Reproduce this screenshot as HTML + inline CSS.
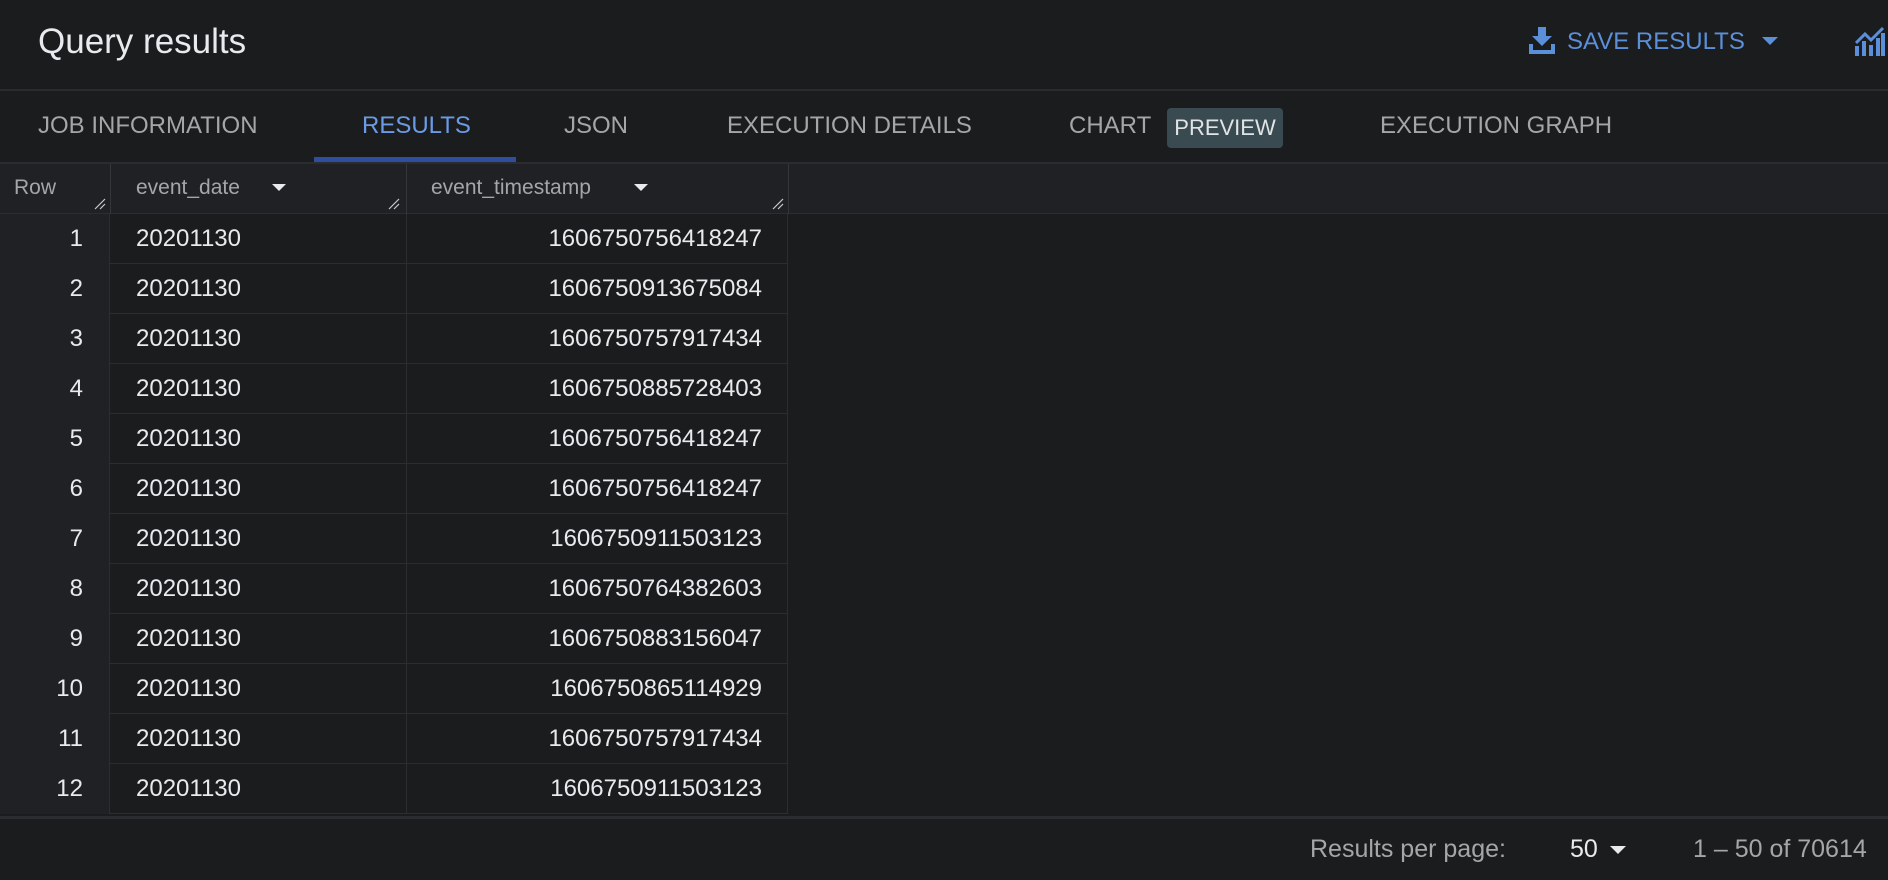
<!DOCTYPE html>
<html><head><meta charset="utf-8"><style>
*{margin:0;padding:0;box-sizing:border-box}
body{width:1888px;height:880px;background:#1b1c1e;font-family:"Liberation Sans",sans-serif;position:relative;overflow:hidden;color:#e8eaed}
.a{position:absolute;white-space:nowrap}
.tab{position:absolute;top:112px;font-size:24px;color:#a4a6a8}
.row{position:absolute;left:0;width:788px;height:50px;border-bottom:1px solid #2c2d30}
.row .n{position:absolute;left:0;width:110px;height:50px;background:#202124;border-right:1px solid #2c2d30;text-align:right;padding-right:26px;line-height:50px;font-size:24px}
.row .d{position:absolute;left:136px;line-height:50px;font-size:24px}
.row .t{position:absolute;left:406px;width:382px;height:50px;border-left:1px solid #2c2d30;border-right:1px solid #2c2d30;text-align:right;padding-right:25px;line-height:50px;font-size:24px}
.rs{position:absolute;bottom:4px;width:12px;height:12px}
</style></head><body>
<div class="a" style="left:38px;top:22px;font-size:35px;color:#e8eaed">Query results</div>
<svg class="a" style="left:1529px;top:27px" width="26" height="28" viewBox="0 0 26 28"><path d="M9 0h8v9h6L13 19 3 9h6z" fill="#5b8fd9"/><path d="M0 17h4v6h18v-6h4v10H0z" fill="#5b8fd9"/></svg>
<div class="a" style="left:1567px;top:28px;font-size:24px;color:#5b8fd9;font-weight:500">SAVE RESULTS</div>
<svg class="a" style="left:1762px;top:37px" width="16" height="9"><path d="M0 0h16L8 8z" fill="#5b8fd9"/></svg>
<svg class="a" style="left:1855px;top:26px" width="30" height="30" viewBox="0 0 30 30"><path d="M1 17l9-9 6 6L28 2" stroke="#5b8fd9" stroke-width="3" fill="none"/><rect x="0" y="20" width="4" height="10" fill="#5b8fd9"/><rect x="7" y="15" width="4" height="15" fill="#5b8fd9"/><rect x="14" y="19" width="4" height="11" fill="#5b8fd9"/><rect x="21" y="12" width="4" height="18" fill="#5b8fd9"/><rect x="26" y="7" width="4" height="23" fill="#5b8fd9"/></svg>
<div class="a" style="left:0;top:89px;width:1888px;height:2px;background:#2b2c2f"></div>
<div class="tab" style="left:38px">JOB INFORMATION</div>
<div class="tab" style="left:362px;color:#6b9be6">RESULTS</div>
<div class="tab" style="left:564px">JSON</div>
<div class="tab" style="left:727px">EXECUTION DETAILS</div>
<div class="tab" style="left:1069px">CHART</div>
<div class="a" style="left:1167px;top:108px;width:116px;height:40px;background:#3a4a51;border-radius:4px;color:#e0e4e6;font-size:22px;line-height:40px;text-align:center">PREVIEW</div>
<div class="tab" style="left:1380px">EXECUTION GRAPH</div>
<div class="a" style="left:314px;top:157px;width:202px;height:5px;background:#2f4f9e"></div>
<div class="a" style="left:0;top:162px;width:1888px;height:2px;background:#2b2c2f"></div>
<div class="a" style="left:0;top:164px;width:1888px;height:50px;background:#202124;border-bottom:1px solid #2c2d30"></div>
<div class="a" style="left:110px;top:164px;width:1px;height:50px;background:#35363a"></div>
<div class="a" style="left:406px;top:164px;width:1px;height:50px;background:#35363a"></div>
<div class="a" style="left:788px;top:164px;width:1px;height:50px;background:#35363a"></div>
<div class="a" style="left:14px;top:176px;font-size:21px;color:#a4a6a8">Row</div>
<div class="a" style="left:136px;top:176px;font-size:21px;color:#a4a6a8">event_date</div>
<svg class="a" style="left:272px;top:184px" width="14" height="8"><path d="M0 0h14L7 7z" fill="#e8eaed"/></svg>
<div class="a" style="left:431px;top:176px;font-size:21px;color:#a4a6a8">event_timestamp</div>
<svg class="a" style="left:634px;top:184px" width="14" height="8"><path d="M0 0h14L7 7z" fill="#e8eaed"/></svg>
<svg class="rs" style="left:94px;top:198px"><path d="M1 11L11 1M6 11L11 6" stroke="#ccc" stroke-width="1.2"/></svg>
<svg class="rs" style="left:388px;top:198px"><path d="M1 11L11 1M6 11L11 6" stroke="#ccc" stroke-width="1.2"/></svg>
<svg class="rs" style="left:772px;top:198px"><path d="M1 11L11 1M6 11L11 6" stroke="#ccc" stroke-width="1.2"/></svg>
<div class="row" style="top:214px"><div class="n">1</div><div class="d">20201130</div><div class="t">1606750756418247</div></div>
<div class="row" style="top:264px"><div class="n">2</div><div class="d">20201130</div><div class="t">1606750913675084</div></div>
<div class="row" style="top:314px"><div class="n">3</div><div class="d">20201130</div><div class="t">1606750757917434</div></div>
<div class="row" style="top:364px"><div class="n">4</div><div class="d">20201130</div><div class="t">1606750885728403</div></div>
<div class="row" style="top:414px"><div class="n">5</div><div class="d">20201130</div><div class="t">1606750756418247</div></div>
<div class="row" style="top:464px"><div class="n">6</div><div class="d">20201130</div><div class="t">1606750756418247</div></div>
<div class="row" style="top:514px"><div class="n">7</div><div class="d">20201130</div><div class="t">1606750911503123</div></div>
<div class="row" style="top:564px"><div class="n">8</div><div class="d">20201130</div><div class="t">1606750764382603</div></div>
<div class="row" style="top:614px"><div class="n">9</div><div class="d">20201130</div><div class="t">1606750883156047</div></div>
<div class="row" style="top:664px"><div class="n">10</div><div class="d">20201130</div><div class="t">1606750865114929</div></div>
<div class="row" style="top:714px"><div class="n">11</div><div class="d">20201130</div><div class="t">1606750757917434</div></div>
<div class="row" style="top:764px"><div class="n">12</div><div class="d">20201130</div><div class="t">1606750911503123</div></div>
<div class="a" style="left:0;top:816px;width:1888px;height:3px;background:#2b2c2f"></div>
<div class="a" style="left:1310px;top:835px;font-size:25px;color:#a4a6a8">Results per page:</div>
<div class="a" style="left:1570px;top:835px;font-size:25px;color:#e8eaed">50</div>
<svg class="a" style="left:1610px;top:846px" width="16" height="9"><path d="M0 0h16L8 8z" fill="#e8eaed"/></svg>
<div class="a" style="left:1693px;top:835px;font-size:25px;color:#a4a6a8">1 – 50 of 70614</div>
</body></html>
